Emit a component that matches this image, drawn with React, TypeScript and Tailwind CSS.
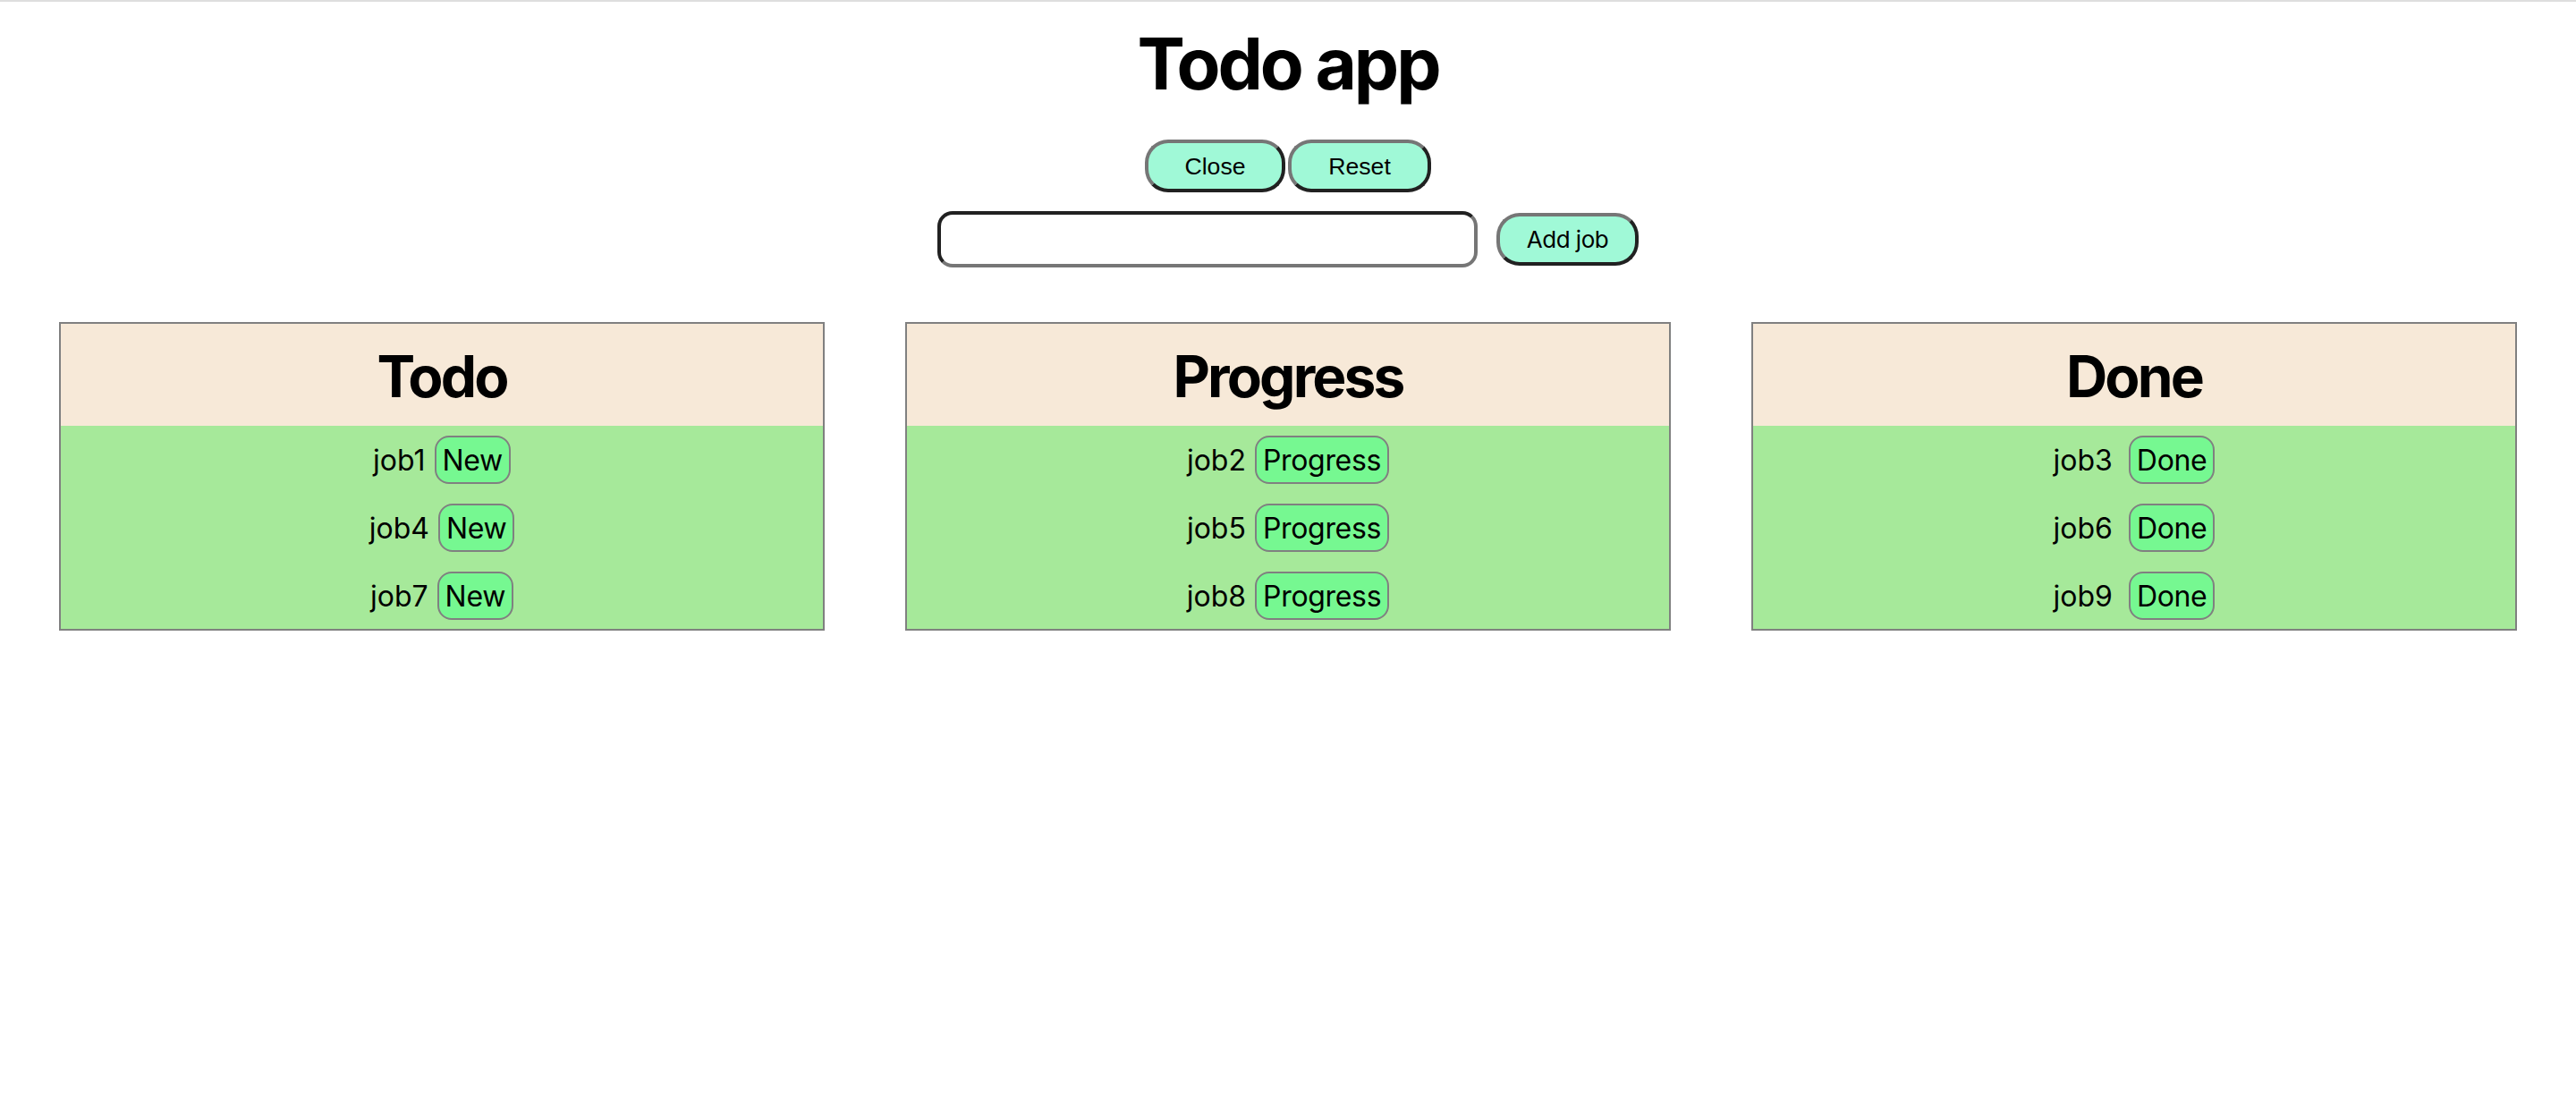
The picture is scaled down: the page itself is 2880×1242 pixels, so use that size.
import React from "react";

const columns = [
  { title: "Todo", jobs: ["job1", "job4", "job7"], badge: "New", gap: "gap-[10px]" },
  { title: "Progress", jobs: ["job2", "job5", "job8"], badge: "Progress", gap: "gap-[10px]" },
  { title: "Done", jobs: ["job3", "job6", "job9"], badge: "Done", gap: "gap-[18px]" },
];

export default function App() {
  return (
    <div className="min-h-[1242px] bg-white border-t-2 border-[#dedede] text-black font-['Inter','Noto_Sans',sans-serif]">
      <h1 className="mt-[20px] text-center text-[80px] leading-[97px] font-bold tracking-[-0.039em]">Todo app</h1>

      <div className="mt-[37px] flex justify-center gap-[3px]">
        <button className="h-[59px] w-[157px] rounded-[26px] border-[4px] [border-style:outset] border-[#767676] bg-[#a0f9d7] pt-[2px] font-['Liberation_Sans',Arial,sans-serif] text-[26.67px] leading-none">
          Close
        </button>
        <button className="h-[59px] w-[160px] rounded-[26px] border-[4px] [border-style:outset] border-[#767676] bg-[#a0f9d7] pt-[2px] font-['Liberation_Sans',Arial,sans-serif] text-[26.67px] leading-none">
          Reset
        </button>
      </div>

      <div className="mt-[21px] flex items-center justify-center gap-[21px]">
        <input
          type="text"
          className="h-[63px] w-[604px] rounded-[17px] border-[4px] [border-style:inset] border-[#767676] bg-white px-3 text-[26px] outline-none"
        />
        <button className="h-[59px] w-[159px] rounded-[26px] border-[4px] [border-style:outset] border-[#767676] bg-[#a0f9d7] pt-[1px] text-[26px] leading-none tracking-[-0.02em]">
          Add job
        </button>
      </div>

      <div className="mt-[61px] grid grid-cols-3 gap-[90px] px-[66px]">
        {columns.map((col) => (
          <div key={col.title} className="border-2 border-[#808080]">
            <div className="flex h-[114px] items-center justify-center bg-[#f7e9d8] pt-[3px] text-[64px] font-bold leading-none tracking-[-0.045em]">
              {col.title}
            </div>
            <div className="flex flex-col gap-[22px] bg-[#a6e99a] pt-[11px] pb-[10px]">
              {col.jobs.map((job) => (
                <div key={job} className={`flex h-[54px] items-center justify-center ${col.gap} text-[32px]`}>
                  <span className="pt-[2px]">{job}</span>
                  <span className="flex h-[54px] items-center rounded-[16px] border-2 border-[#808080] bg-[#76f891] px-[7px] pt-[2px] tracking-[-0.01em]">
                    {col.badge}
                  </span>
                </div>
              ))}
            </div>
          </div>
        ))}
      </div>
    </div>
  );
}
